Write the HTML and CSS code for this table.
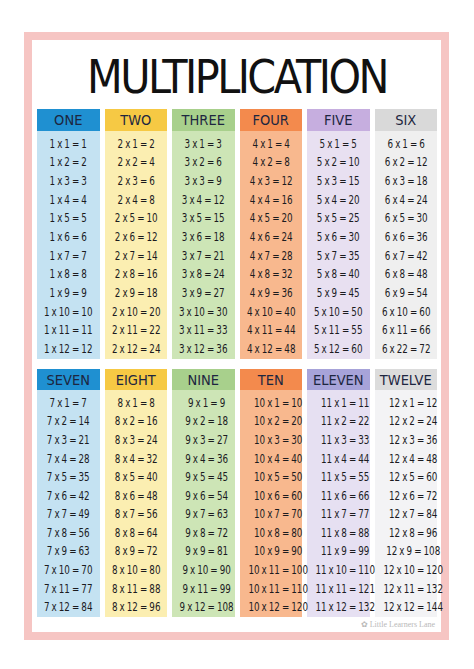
FILE: index.html
```html
<!DOCTYPE html>
<html lang="en">
<head>
    <meta charset="UTF-8">
    <meta name="viewport" content="width=device-width, initial-scale=1.0">
    <title>Multiplication Chart</title>
    <link rel="stylesheet" href="styles.css">
</head>
<body>
    <div class="poster">
        <h1 class="title">MULTIPLICATION</h1>

        <div class="table-row">
            <div class="col blue">
                <div class="col-head">ONE</div>
                <div class="col-body">
                    <span>1 x 1 = 1</span><span>1 x 2 = 2</span><span>1 x 3 = 3</span><span>1 x 4 = 4</span>
                    <span>1 x 5 = 5</span><span>1 x 6 = 6</span><span>1 x 7 = 7</span><span>1 x 8 = 8</span>
                    <span>1 x 9 = 9</span><span>1 x 10 = 10</span><span>1 x 11 = 11</span><span>1 x 12 = 12</span>
                </div>
            </div>
            <div class="col yellow">
                <div class="col-head">TWO</div>
                <div class="col-body">
                    <span>2 x 1 = 2</span><span>2 x 2 = 4</span><span>2 x 3 = 6</span><span>2 x 4 = 8</span>
                    <span>2 x 5 = 10</span><span>2 x 6 = 12</span><span>2 x 7 = 14</span><span>2 x 8 = 16</span>
                    <span>2 x 9 = 18</span><span>2 x 10 = 20</span><span>2 x 11 = 22</span><span>2 x 12 = 24</span>
                </div>
            </div>
            <div class="col green">
                <div class="col-head">THREE</div>
                <div class="col-body">
                    <span>3 x 1 = 3</span><span>3 x 2 = 6</span><span>3 x 3 = 9</span><span>3 x 4 = 12</span>
                    <span>3 x 5 = 15</span><span>3 x 6 = 18</span><span>3 x 7 = 21</span><span>3 x 8 = 24</span>
                    <span>3 x 9 = 27</span><span>3 x 10 = 30</span><span>3 x 11 = 33</span><span>3 x 12 = 36</span>
                </div>
            </div>
            <div class="col orange">
                <div class="col-head">FOUR</div>
                <div class="col-body">
                    <span>4 x 1 = 4</span><span>4 x 2 = 8</span><span>4 x 3 = 12</span><span>4 x 4 = 16</span>
                    <span>4 x 5 = 20</span><span>4 x 6 = 24</span><span>4 x 7 = 28</span><span>4 x 8 = 32</span>
                    <span>4 x 9 = 36</span><span>4 x 10 = 40</span><span>4 x 11 = 44</span><span>4 x 12 = 48</span>
                </div>
            </div>
            <div class="col purple">
                <div class="col-head">FIVE</div>
                <div class="col-body">
                    <span>5 x 1 = 5</span><span>5 x 2 = 10</span><span>5 x 3 = 15</span><span>5 x 4 = 20</span>
                    <span>5 x 5 = 25</span><span>5 x 6 = 30</span><span>5 x 7 = 35</span><span>5 x 8 = 40</span>
                    <span>5 x 9 = 45</span><span>5 x 10 = 50</span><span>5 x 11 = 55</span><span>5 x 12 = 60</span>
                </div>
            </div>
            <div class="col grey">
                <div class="col-head">SIX</div>
                <div class="col-body">
                    <span>6 x 1 = 6</span><span>6 x 2 = 12</span><span>6 x 3 = 18</span><span>6 x 4 = 24</span>
                    <span>6 x 5 = 30</span><span>6 x 6 = 36</span><span>6 x 7 = 42</span><span>6 x 8 = 48</span>
                    <span>6 x 9 = 54</span><span>6 x 10 = 60</span><span>6 x 11 = 66</span><span>6 x 22 = 72</span>
                </div>
            </div>
        </div>

        <div class="table-row">
            <div class="col blue">
                <div class="col-head">SEVEN</div>
                <div class="col-body">
                    <span>7 x 1 = 7</span><span>7 x 2 = 14</span><span>7 x 3 = 21</span><span>7 x 4 = 28</span>
                    <span>7 x 5 = 35</span><span>7 x 6 = 42</span><span>7 x 7 = 49</span><span>7 x 8 = 56</span>
                    <span>7 x 9 = 63</span><span>7 x 10 = 70</span><span>7 x 11 = 77</span><span>7 x 12 = 84</span>
                </div>
            </div>
            <div class="col yellow">
                <div class="col-head">EIGHT</div>
                <div class="col-body">
                    <span>8 x 1 = 8</span><span>8 x 2 = 16</span><span>8 x 3 = 24</span><span>8 x 4 = 32</span>
                    <span>8 x 5 = 40</span><span>8 x 6 = 48</span><span>8 x 7 = 56</span><span>8 x 8 = 64</span>
                    <span>8 x 9 = 72</span><span>8 x 10 = 80</span><span>8 x 11 = 88</span><span>8 x 12 = 96</span>
                </div>
            </div>
            <div class="col green">
                <div class="col-head">NINE</div>
                <div class="col-body">
                    <span>9 x 1 = 9</span><span>9 x 2 = 18</span><span>9 x 3 = 27</span><span>9 x 4 = 36</span>
                    <span>9 x 5 = 45</span><span>9 x 6 = 54</span><span>9 x 7 = 63</span><span>9 x 8 = 72</span>
                    <span>9 x 9 = 81</span><span>9 x 10 = 90</span><span>9 x 11 = 99</span><span>9 x 12 = 108</span>
                </div>
            </div>
            <div class="col orange">
                <div class="col-head">TEN</div>
                <div class="col-body">
                    <span>10 x 1 = 10</span><span>10 x 2 = 20</span><span>10 x 3 = 30</span><span>10 x 4 = 40</span>
                    <span>10 x 5 = 50</span><span>10 x 6 = 60</span><span>10 x 7 = 70</span><span>10 x 8 = 80</span>
                    <span>10 x 9 = 90</span><span>10 x 11 = 100</span><span>10 x 11 = 110</span><span>10 x 12 = 120</span>
                </div>
            </div>
            <div class="col periwinkle">
                <div class="col-head">ELEVEN</div>
                <div class="col-body">
                    <span>11 x 1 = 11</span><span>11 x 2 = 22</span><span>11 x 3 = 33</span><span>11 x 4 = 44</span>
                    <span>11 x 5 = 55</span><span>11 x 6 = 66</span><span>11 x 7 = 77</span><span>11 x 8 = 88</span>
                    <span>11 x 9 = 99</span><span>11 x 10 = 110</span><span>11 x 11 = 121</span><span>11 x 12 = 132</span>
                </div>
            </div>
            <div class="col silver">
                <div class="col-head">TWELVE</div>
                <div class="col-body">
                    <span>12 x 1 = 12</span><span>12 x 2 = 24</span><span>12 x 3 = 36</span><span>12 x 4 = 48</span>
                    <span>12 x 5 = 60</span><span>12 x 6 = 72</span><span>12 x 7 = 84</span><span>12 x 8 = 96</span>
                    <span>12 x 9 = 108</span><span>12 x 10 = 120</span><span>12 x 11 = 132</span><span>12 x 12 = 144</span>
                </div>
            </div>
        </div>

        <div class="footer">
            <span class="brand">&#10047; Little Learners Lane</span>
        </div>
    </div>
</body>
</html>
```

FILE: styles.css
```css
body {
    margin: 0;
    background-color: #ffffff;
    font-family: "DejaVu Sans Condensed", "DejaVu Sans", sans-serif;
    color: #1b1b1f;
}

.poster {
    width: 400px;
    height: 592px;
    margin: 32px 0 0 24px;
    border: 8px solid #f6c5c3;
    padding: 0 4px 0 5px;
    display: flex;
    flex-direction: column;
}

.title {
    height: 69px;
    margin: 0;
    padding-top: 5px;
    box-sizing: border-box;
    display: flex;
    align-items: center;
    justify-content: center;
    font-size: 46px;
    font-weight: normal;
    letter-spacing: -2.5px;
    color: #111;
}

.table-row {
    display: grid;
    grid-template-columns: repeat(6, minmax(0, 1fr));
    gap: 5px;
}

.table-row + .table-row {
    margin-top: 10px;
}

.col-head {
    height: 22px;
    display: flex;
    align-items: center;
    justify-content: center;
    font-size: 14.5px;
    color: #1d2640;
}

.table-row + .table-row .col-head {
    height: 21px;
}

.col-body {
    height: 228px;
    box-sizing: border-box;
    padding: 3px 0 1px;
    display: grid;
    grid-template-rows: repeat(12, 1fr);
    font-size: 12.5px;
    word-spacing: -1px;
}

.table-row + .table-row .col-body {
    height: 227px;
}

/* glyphs in the chart are tall and narrow */
.col-body span {
    display: flex;
    align-items: center;
    justify-content: center;
    white-space: nowrap;
    transform: scaleX(0.78);
}

.blue .col-head { background-color: #1f90d1; }
.blue .col-body { background-color: #c4e2f2; }

.yellow .col-head { background-color: #f6c944; }
.yellow .col-body { background-color: #fbeeb1; }

.green .col-head { background-color: #a8d08c; }
.green .col-body { background-color: #cde5b6; }

.orange .col-head { background-color: #f38a4d; }
.orange .col-body { background-color: #f8b88e; }

.purple .col-head { background-color: #c6aedf; }
.purple .col-body { background-color: #e8e0f1; }

.grey .col-head { background-color: #d9d9d9; }
.grey .col-body { background-color: #efefef; }

.periwinkle .col-head { background-color: #a7a3d9; }
.periwinkle .col-body { background-color: #e6e0f2; }

.silver .col-head { background-color: #dcdcdc; }
.silver .col-body { background-color: #f3f3f5; }

.footer {
    flex: 1;
    display: flex;
    justify-content: flex-end;
    align-items: center;
    padding-right: 2px;
}

.brand {
    font-family: "Liberation Serif", serif;
    font-size: 8px;
    color: #b9b9b9;
}
```
